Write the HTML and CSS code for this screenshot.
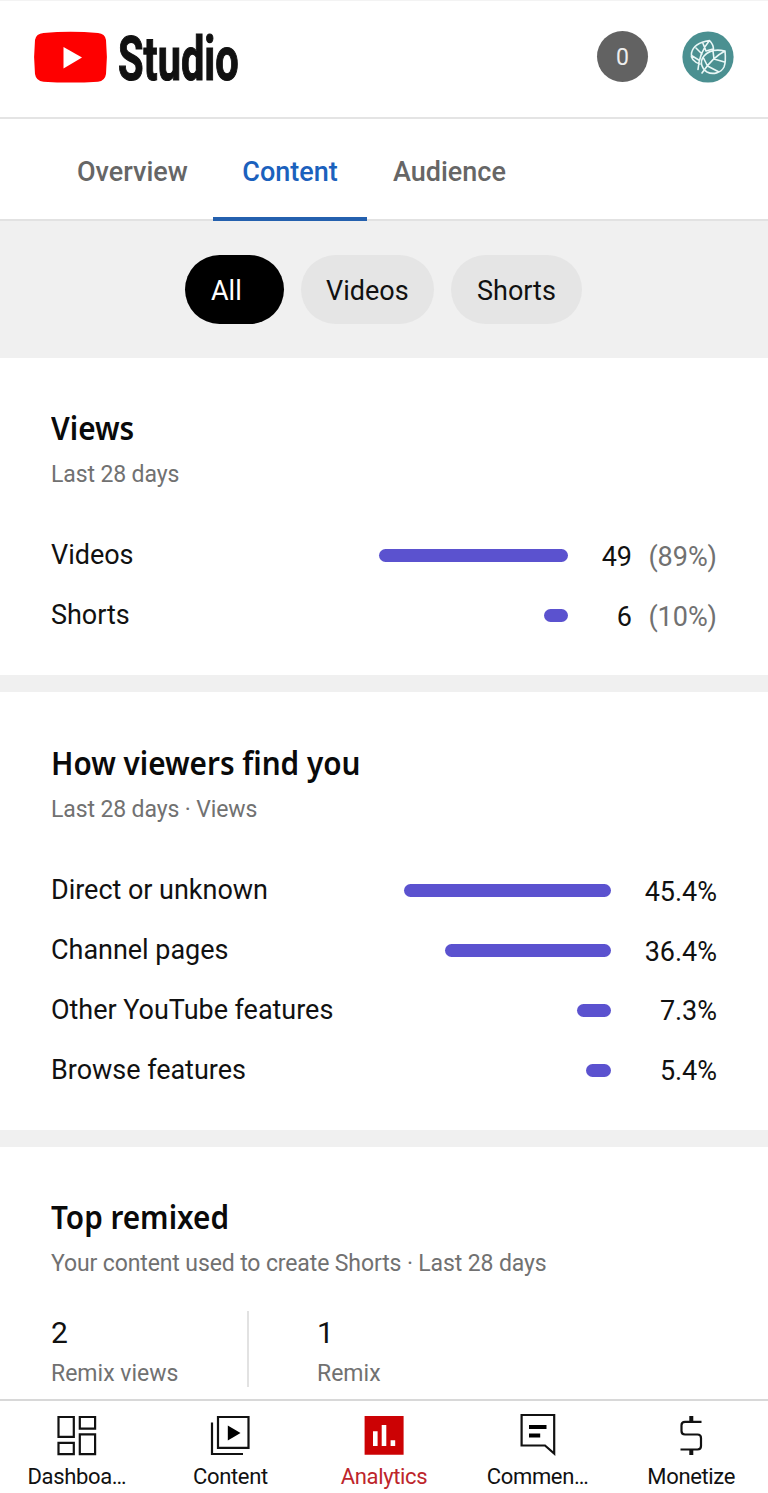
FILE: index.html
```
<!DOCTYPE html>
<html lang="en">
<head>
<meta charset="utf-8">
<title>Studio Analytics</title>
<link rel="stylesheet" href="styles.css">
</head>
<body>
<div class="app">
  <header class="topbar">
    <svg class="logo" width="240" height="80" viewBox="0 0 240 80">
      <path d="M10.500 4Q37.500 1.500 65 4Q72 4.500 73 11Q74.800 28 73 45Q72 52 65 52.700Q37.500 54.500 10.500 52.700Q3 52 2 45Q0.200 28 2 11Q3 4.600 10.500 4Z" fill="#fe0000"/>
      <path d="M30.500 18v21.500L49 28.500z" fill="#fff"/>
      <text class="logo-text" transform="translate(85 51) scale(.67 1)">Studio</text>
    </svg>
    <div class="top-actions">
      <span class="count">0</span>
      <svg class="avatar" width="52" height="52" viewBox="0 0 52 52">
        <circle cx="26" cy="26" r="25.600" fill="#4b9091"/>
        <g fill="none" stroke="#e9f7f6" stroke-width="1.600" stroke-linecap="round" stroke-linejoin="round">
          <path d="M18 33C12 31 8.500 27 9.500 22C11 15 18 11 27.500 9.500C30 12 31.500 15 31.500 18.500M27.500 9.500C22 16 17 25 16 38.500M14 17l6 6M9.500 24.500l8 5M21 12.500l3 7.500l7-2"/>
          <path d="M43 20C34 18 27 19 22 25C17 31 20 38 25 41C31 44 39 42 42 36C44 31 43.500 25 43 20M43 20C33 25 26 33 20 42M31 20l1 8L42.500 31M21.500 27l4 8L37 41"/>
        </g>
      </svg>
    </div>
  </header>

  <nav class="tabs">
    <a class="tab tab-overview">Overview</a>
    <a class="tab tab-content active">Content</a>
    <a class="tab tab-audience">Audience</a>
  </nav>

  <div class="chips">
    <span class="chip chip-all">All</span>
    <span class="chip chip-videos">Videos</span>
    <span class="chip chip-shorts">Shorts</span>
  </div>

  <section class="card views">
    <h2>Views</h2>
    <p class="sub">Last 28 days</p>
    <div class="rows">
      <div class="row"><span class="label">Videos</span><span class="bar" style="width:189px"></span><span class="num">49</span><span class="pct">(89%)</span></div>
      <div class="row"><span class="label">Shorts</span><span class="bar" style="width:24px"></span><span class="num">6</span><span class="pct">(10%)</span></div>
    </div>
  </section>

  <section class="card sources">
    <h2>How viewers find you</h2>
    <p class="sub">Last 28 days · Views</p>
    <div class="rows">
      <div class="row"><span class="label">Direct or unknown</span><span class="bar" style="width:207px"></span><span class="share">45.4%</span></div>
      <div class="row"><span class="label">Channel pages</span><span class="bar" style="width:166px"></span><span class="share">36.4%</span></div>
      <div class="row"><span class="label">Other YouTube features</span><span class="bar" style="width:34px"></span><span class="share">7.3%</span></div>
      <div class="row"><span class="label">Browse features</span><span class="bar" style="width:25px"></span><span class="share">5.4%</span></div>
    </div>
  </section>

  <section class="card remixed">
    <h2>Top remixed</h2>
    <p class="sub">Your content used to create Shorts · Last 28 days</p>
    <div class="stats">
      <div class="stat"><span class="stat-num">2</span><span class="stat-label">Remix views</span></div>
      <div class="stat"><span class="stat-num">1</span><span class="stat-label">Remix</span></div>
    </div>
  </section>

  <nav class="bottom">
    <a class="item">
      <svg width="44" height="44" viewBox="0 0 44 44" fill="none" stroke="#111" stroke-width="2.200"><path d="M3.500 4h15.300v19.800H3.500zM24.800 4h15.300v11.700H24.800zM3.500 29.800h15.300v11.400H3.500zM24.800 21.300h15.300v19.900H24.800z"/></svg>
      <span>Dashboa…</span>
    </a>
    <a class="item">
      <svg width="44" height="44" viewBox="0 0 44 44" fill="none" stroke="#111" stroke-width="2.200"><path d="M10 4h30.500v30.800H10zM4 9.500v31.500h31"/><path d="M19.800 12.500v15l12.700-7.500z" fill="#000" stroke="none"/></svg>
      <span>Content</span>
    </a>
    <a class="item current">
      <svg width="44" height="44" viewBox="0 0 44 44"><path d="M2.600 3h39v38.700h-39z" fill="#cc0204"/><path d="M11 18.200h4.600V33H11zM19.700 12h4.600v21h-4.600zM28.600 27.300h4.600V33h-4.600z" fill="#fff"/></svg>
      <span>Analytics</span>
    </a>
    <a class="item">
      <svg width="44" height="44" viewBox="0 0 44 44" fill="none" stroke="#111" stroke-width="2.200"><path d="M5.600 2h32.600V40.500L29 32.500H5.600z"/><path d="M13 14h17.500M13 22.500h11.200" stroke="#000" stroke-width="4"/></svg>
      <span>Commen…</span>
    </a>
    <a class="item">
      <svg width="44" height="44" viewBox="0 0 44 44" fill="none" stroke="#111" stroke-width="2.200"><path d="M32.500 8.800H16q-3.500 0-3.500 3.500V18q0 3.500 3.500 3.500h12.500q3.500 0 3.500 3.500v8q0 3.500-3.500 3.500H11.500"/><path d="M22.300 3V10M22.300 36v6" stroke-width="4"/></svg>
      <span>Monetize</span>
    </a>
  </nav>
</div>
</body>
</html>
```
FILE: styles.css
```
* { box-sizing: border-box; }
body { margin: 0; background: #fff; font-family: Roboto, "Liberation Sans", sans-serif; color: #111; }
.app { width: 768px; height: 1493px; display: flex; flex-direction: column; overflow: hidden; border-top: 1px solid #f3f3f3; }
h2, p { margin: 0; }

.topbar { height: 118px; flex: none; display: flex; justify-content: space-between; padding: 28px 34px 0 33px; border-bottom: 2px solid #e4e4e4; }
.logo-text { font: 700 62px Roboto, sans-serif; fill: #111; stroke: #111; stroke-width: 1.2px; }
.top-actions { display: flex; gap: 34px; padding-top: 2px; }
.count { width: 51px; height: 51px; border-radius: 50%; background: #626262; color: #eee; font-size: 23px; line-height: 53px; text-align: center; }

.tabs { height: 102px; flex: none; display: flex; align-items: stretch; border-bottom: 2px solid #e2e2e2; font-size: 27px; font-weight: 500; line-height: 106px; color: #666; }
.tab { white-space: nowrap; height: 102px; }
.tab-overview { width: 213px; padding-left: 77px; }
.tab-content { width: 154px; text-align: center; }
.tab-audience { padding-left: 26px; }
.active { color: #1b61bd; border-bottom: 4px solid #2460ae; }

.chips { height: 137px; flex: none; background: #f0f0f0; padding: 34px 0 0 185px; display: flex; gap: 17px; font-size: 27px; line-height: 73px; }
.chip { height: 69px; border-radius: 35px; background: #e5e5e5; padding-left: 26px; }
.chip-all { width: 99px; background: #000; color: #fff; }
.chip-videos { width: 133px; padding-left: 25px; }
.chip-shorts { width: 131px; }

.card { flex: none; padding: 49px 51px 0 51px; }
.card h2 { font: 600 32px/42px "Noto Sans", sans-serif; color: #0a0a0a; white-space: nowrap; font-variant-ligatures: none; transform: scaleX(.928); transform-origin: left; }
.views, .sources { border-bottom: 17px solid #f0f0f0; }
.views { height: 334px; }
.sources { height: 455px; padding-top: 50px; }
.remixed { height: 252px; }
.sub { font-size: 23px; line-height: 28px; margin-top: 12px; letter-spacing: -0.12px; color: #717171; white-space: nowrap; }
.rows { margin-top: 37px; }
.row { height: 59.800px; display: flex; align-items: center; font-size: 27px; line-height: 36px; letter-spacing: -0.03px; }
.label { flex: 1; padding-bottom: 1px; white-space: nowrap; }
.bar { height: 13px; border-radius: 7px; background: #5b52cf; }
.num, .pct, .share { text-align: right; padding-top: 2px; }
.num { width: 64px; }
.pct { width: 85px; color: #717171; }
.share { width: 106px; }

.stats { display: flex; height: 76px; margin-top: 33px; }
.stat { display: flex; flex-direction: column; width: 198px; }
.stat + .stat { border-left: 2px solid #e2e2e2; padding-left: 68px; margin-left: -2px; }
.stat-num { font-size: 30px; line-height: 36px; margin-top: 4px; }
.stat-label { font-size: 23px; line-height: 28px; margin-top: 9px; color: #717171; }

.bottom { height: 94px; flex: none; border-top: 2px solid #d8d8d8; display: grid; grid-template-columns: repeat(5, 1fr); }
.item { display: flex; flex-direction: column; align-items: center; padding-top: 12px; font-size: 22px; line-height: 28px; letter-spacing: -0.35px; }
.item svg { flex: none; }
.item span { margin-top: 6px; }
.current { color: #bd252b; }
```
